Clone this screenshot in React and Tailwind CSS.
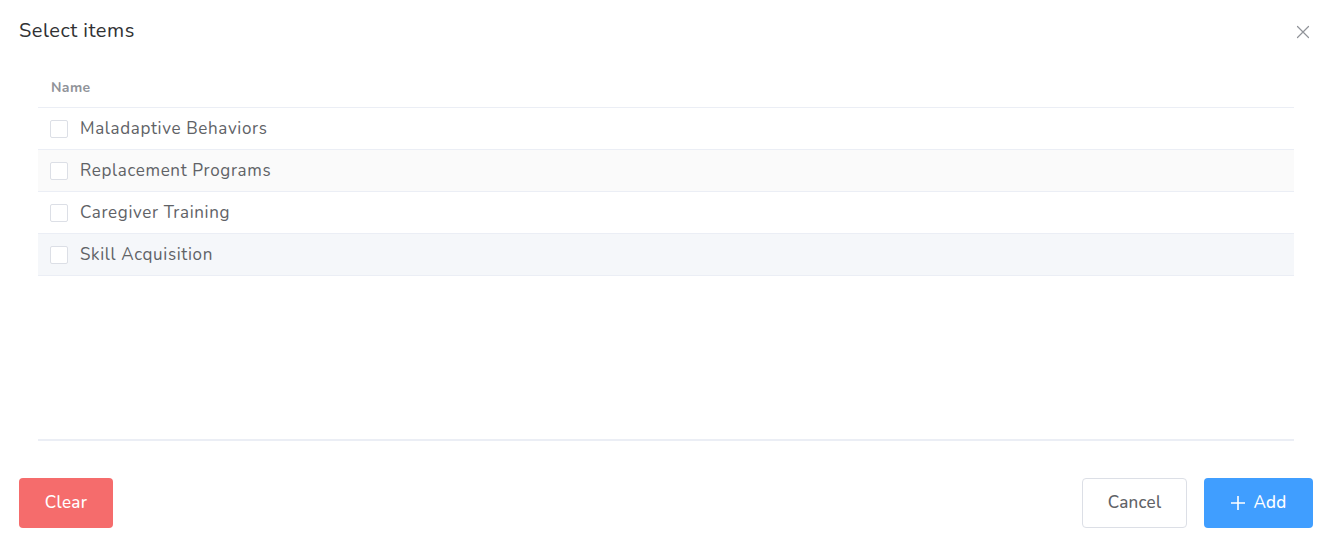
import * as React from "react";

const items = [
  { name: "Maladaptive Behaviors", bg: "bg-white" },
  { name: "Replacement Programs", bg: "bg-[#fafafa]" },
  { name: "Caregiver Training", bg: "bg-white" },
  { name: "Skill Acquisition", bg: "bg-[#f5f7fa]" },
];

function CloseIcon() {
  return (
    <svg width="14" height="14" viewBox="0 0 14 14" fill="none">
      <path d="M1.5 1.5L12.5 12.5M12.5 1.5L1.5 12.5" stroke="#909399" strokeWidth="1.2" strokeLinecap="round" />
    </svg>
  );
}

export default function App() {
  return (
    <div
      className="w-[1330px] h-[544px] bg-white flex flex-col"
      style={{ fontFamily: '"Nunito", "Noto Sans", sans-serif' }}
    >
      <div className="flex items-center justify-between pl-[19px] pr-[17px] pt-[17px] h-[44px]">
        <span className="text-[20px] leading-[26px] tracking-[0.5px] text-[#303133]">Select items</span>
        <button className="flex items-center justify-center w-[20px] h-[20px] mt-[3px]">
          <CloseIcon />
        </button>
      </div>

      <div className="ml-[38px] mr-[36px] mt-[21px] flex flex-col h-[376px] border-b-2 border-[#ebeef5]">
        <div className="h-[43px] flex items-center px-[13px] pt-[2px] border-b border-[#ebeef5]">
          <span className="text-[14px] font-bold tracking-[0.4px] text-[#909399]">Name</span>
        </div>
        {items.map((it) => (
          <div
            key={it.name}
            className={`h-[42px] flex items-center gap-[12px] px-[12px] border-b border-[#ebeef5] ${it.bg}`}
          >
            <span className="w-[18px] h-[18px] rounded-[2px] border border-[#dcdfe6] bg-white" />
            <span className="text-[17px] tracking-[0.65px] text-[#606266]">{it.name}</span>
          </div>
        ))}
      </div>

      <div className="flex items-center justify-between pl-[19px] pr-[17px] mt-[37px]">
        <button className="h-[50px] w-[94px] rounded-[4px] bg-[#f56c6c] text-white text-[17px] font-medium tracking-[0.3px]">
          Clear
        </button>
        <div className="flex gap-[17px]">
          <button className="h-[50px] w-[105px] rounded-[4px] border border-[#dcdfe6] bg-white text-[#606266] text-[17px] font-medium tracking-[0.3px]">
            Cancel
          </button>
          <button className="h-[50px] w-[109px] rounded-[4px] bg-[#409eff] text-white text-[17px] font-medium tracking-[0.3px] flex items-center justify-center gap-[7px]">
            <svg width="16" height="16" viewBox="0 0 16 16" fill="none">
              <path d="M8 1V15M1 8H15" stroke="white" strokeWidth="1.6" />
            </svg>
            Add
          </button>
        </div>
      </div>
    </div>
  );
}
